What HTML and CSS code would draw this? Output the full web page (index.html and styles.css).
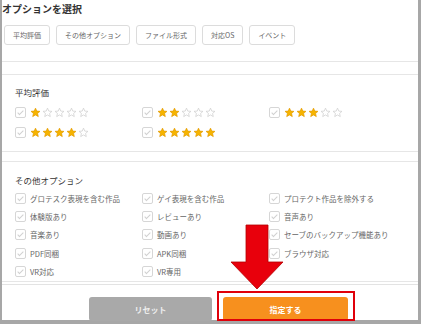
FILE: index.html
```html
<!DOCTYPE html>
<html lang="ja">
<head>
    <meta charset="UTF-8">
    <meta name="viewport" content="width=device-width, initial-scale=1.0">
    <title>オプションを選択</title>
    <link rel="stylesheet" href="styles.css">
</head>
<body>

    <svg class="defs" width="0" height="0">
        <symbol id="star" viewBox="0 0 24 24">
            <path d="M12 2.5l2.8 6.4 6.9.6-5.2 4.6 1.6 6.8L12 17.3l-6.1 3.6 1.6-6.8-5.2-4.6 6.9-.6z"/>
        </symbol>
    </svg>

    <div class="panel">
        <h1 class="title">オプションを選択</h1>

        <div class="tabs">
            <span class="tab">平均評価</span>
            <span class="tab">その他オプション</span>
            <span class="tab">ファイル形式</span>
            <span class="tab">対応OS</span>
            <span class="tab">イベント</span>
        </div>

        <div class="scroll">
            <div class="section rating">
                <h2 class="section-title">平均評価</h2>
                <div class="grid">
                    <label class="item"><span class="check"></span><span class="stars">
                        <svg class="on"><use href="#star"/></svg><svg><use href="#star"/></svg><svg><use href="#star"/></svg><svg><use href="#star"/></svg><svg><use href="#star"/></svg>
                    </span></label>
                    <label class="item"><span class="check"></span><span class="stars">
                        <svg class="on"><use href="#star"/></svg><svg class="on"><use href="#star"/></svg><svg><use href="#star"/></svg><svg><use href="#star"/></svg><svg><use href="#star"/></svg>
                    </span></label>
                    <label class="item"><span class="check"></span><span class="stars">
                        <svg class="on"><use href="#star"/></svg><svg class="on"><use href="#star"/></svg><svg class="on"><use href="#star"/></svg><svg><use href="#star"/></svg><svg><use href="#star"/></svg>
                    </span></label>
                    <label class="item"><span class="check"></span><span class="stars">
                        <svg class="on"><use href="#star"/></svg><svg class="on"><use href="#star"/></svg><svg class="on"><use href="#star"/></svg><svg class="on"><use href="#star"/></svg><svg><use href="#star"/></svg>
                    </span></label>
                    <label class="item"><span class="check"></span><span class="stars">
                        <svg class="on"><use href="#star"/></svg><svg class="on"><use href="#star"/></svg><svg class="on"><use href="#star"/></svg><svg class="on"><use href="#star"/></svg><svg class="on"><use href="#star"/></svg>
                    </span></label>
                </div>
            </div>

            <div class="section other">
                <h2 class="section-title">その他オプション</h2>
                <div class="grid">
                    <label class="item"><span class="check"></span>グロテスク表現を含む作品</label>
                    <label class="item"><span class="check"></span>ゲイ表現を含む作品</label>
                    <label class="item"><span class="check"></span>プロテクト作品を除外する</label>
                    <label class="item"><span class="check"></span>体験版あり</label>
                    <label class="item"><span class="check"></span>レビューあり</label>
                    <label class="item"><span class="check"></span>音声あり</label>
                    <label class="item"><span class="check"></span>音楽あり</label>
                    <label class="item"><span class="check"></span>動画あり</label>
                    <label class="item"><span class="check"></span>セーブのバックアップ機能あり</label>
                    <label class="item"><span class="check"></span>PDF同梱</label>
                    <label class="item"><span class="check"></span>APK同梱</label>
                    <label class="item"><span class="check"></span>ブラウザ対応</label>
                    <label class="item"><span class="check"></span>VR対応</label>
                    <label class="item"><span class="check"></span>VR専用</label>
                </div>
            </div>
        </div>

        <div class="footer">
            <button class="btn reset">リセット</button>
            <button class="btn apply">指定する</button>
        </div>
    </div>

    <!-- annotation -->
    <svg class="arrow" width="62" height="68" viewBox="0 0 62 68">
        <path d="M16 1h22v37h15L27 65 1 38h15z"/>
    </svg>
    <div class="highlight-box"></div>

</body>
</html>
```

FILE: styles.css
```css
body {
    margin: 0;
    padding: 0 3px 4px 2px;
    background-color: #a7a7a7;
    font-family: "Noto Sans CJK JP", "Noto Sans", sans-serif;
    color: #333;
}
.defs {
    position: absolute;
}
.panel {
    background: white;
    height: 320px;
    display: flex;
    flex-direction: column;
}
.title {
    margin: 0;
    font-size: 10px;
    line-height: 18px;
    font-weight: bold;
    color: #333;
}
.tabs {
    display: flex;
    gap: 6px;
    margin-top: 7px;
    padding-left: 2px;
    padding-bottom: 16px;
}
.tab {
    height: 18px;
    line-height: 18px;
    padding: 0 8px;
    font-size: 7px;
    color: #666;
    border: 1px solid #dcdcdc;
    border-radius: 3px;
}
.scroll {
    flex: 1;
    overflow: hidden;
    border-top: 1px solid #e6e6e6;
}
.section {
    border-top: 1px solid #e6e6e6;
    border-bottom: 1px solid #e6e6e6;
    padding-left: 13px;
}
.rating {
    margin-top: 12px;
    padding-top: 11px;
    padding-bottom: 9px;
}
.other {
    margin-top: 9px;
    padding-top: 12px;
}
.section-title {
    margin: 0;
    font-size: 8.5px;
    line-height: 13px;
    font-weight: normal;
    color: #333;
}
.grid {
    display: grid;
    grid-template-columns: 127px 127px 1fr;
}
.rating .grid {
    margin-top: 3px;
    grid-auto-rows: 20px;
}
.other .grid {
    margin-top: 2px;
    grid-auto-rows: 18.4px;
}
.item {
    display: flex;
    align-items: center;
    gap: 4px;
    font-size: 7.5px;
    color: #666;
}
.check {
    position: relative;
    width: 9px;
    height: 9px;
    border: 1px solid #d6d6d6;
    border-radius: 2px;
    flex-shrink: 0;
}
.check::after {
    content: "";
    position: absolute;
    left: 3px;
    top: 1px;
    width: 2px;
    height: 5px;
    border-right: 1px solid #d0d0d0;
    border-bottom: 1px solid #d0d0d0;
    transform: rotate(45deg);
}
.stars {
    display: flex;
    gap: 1px;
}
.stars svg {
    width: 11px;
    height: 11px;
    fill: #fff;
    stroke: #cdcdcd;
    stroke-width: 1.6;
}
.stars svg.on {
    fill: #f6b400;
    stroke: #e39b00;
}
.footer {
    border-top: 1px solid #e3e3e3;
    height: 36px;
    display: flex;
    gap: 11px;
    padding-top: 12px;
    padding-left: 87px;
    box-sizing: border-box;
}
.btn {
    height: 24px;
    border: none;
    border-radius: 3px;
    color: white;
    font-family: inherit;
    font-size: 8px;
    font-weight: bold;
}
.reset {
    width: 123px;
    background: #a9a9a9;
    color: #eee;
}
.apply {
    width: 125px;
    background: #f7901e;
}
.arrow {
    position: absolute;
    left: 230px;
    top: 224px;
    fill: #e8000c;
    stroke: #b40000;
    stroke-width: 0.8;
}
.highlight-box {
    position: absolute;
    left: 217px;
    top: 291px;
    width: 134px;
    height: 26px;
    border: 2px solid #e0000a;
}
```
